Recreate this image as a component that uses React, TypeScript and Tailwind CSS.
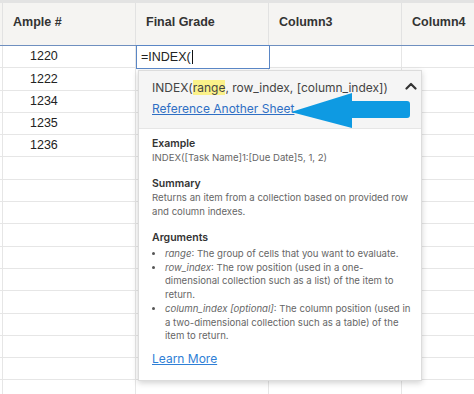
import React from 'react';

const columns = ['Ample #', 'Final Grade', 'Column3', 'Column4'];
const values = ['1220', '1222', '1234', '1235', '1236'];
const rowCount = 16;

const Popup: React.FC = () => (
  <div className="absolute left-[138px] top-[70px] w-[284px] h-[311px] bg-white border border-[#dcdcdc] shadow-[0_2px_6px_rgba(0,0,0,0.18)] font-['Inter',sans-serif]">
    {/* Signature */}
    <div className="h-[58px] bg-[#f5f5f5] border-b border-[#e6e6e6] px-[13px] pt-[9px] relative">
      <div className="text-[12px] leading-[16px] text-[#444]">
        INDEX(<span className="bg-[#fbf18a]">range</span>, row_index, [column_index])
      </div>
      <div className="mt-[5px] text-[12px] leading-[16px] text-[#2f6fc4] underline">Reference Another Sheet</div>
      <svg className="absolute left-[266px] top-[11px]" width="12" height="8" viewBox="0 0 12 8">
        <path d="M1.5 6.5 L6 2 L10.5 6.5" fill="none" stroke="#333" strokeWidth="2.2" strokeLinecap="round" strokeLinejoin="round" />
      </svg>
    </div>

    {/* Details */}
    <div className="pl-[13px] pr-[4px] pt-[8px] text-[9.6px] leading-[14px] text-[#666]">
      <div className="font-semibold text-[#333] text-[10.5px]">Example</div>
      <div>INDEX([Task Name]1:[Due Date]5, 1, 2)</div>

      <div className="mt-[12px] font-semibold text-[#333] text-[10.5px]">Summary</div>
      <div className="leading-[14px]">Returns an item from a collection based on provided row and column indexes.</div>

      <div className="mt-[12px] font-semibold text-[#333] text-[10.5px]">Arguments</div>
      <ul className="mt-[2px] list-disc pl-[13px] leading-[13.7px] marker:text-[#555]">
        <li><i>range</i>: The group of cells that you want to evaluate.</li>
        <li><i>row_index</i>: The row position (used in a one-dimensional collection such as a list) of the item to return.</li>
        <li><i>column_index [optional]</i>: The column position (used in a two-dimensional collection such as a table) of the item to return.</li>
      </ul>

      <div className="mt-[8px] text-[12px] leading-[16px] text-[#2f7fd6] underline">Learn More</div>
    </div>
  </div>
);

const App: React.FC = () => {
  return (
    <div className="relative w-[474px] h-[394px] overflow-hidden bg-white font-['Liberation_Sans',Arial,sans-serif]">
      <div className="h-[3px] bg-[#e3e3e3]" />

      {/* Header row */}
      <div className="flex h-[43px] bg-[#f5f4f2] border-b border-[#6f8fbf]">
        <div className="w-[3px] shrink-0 border-r border-[#e2e2e2]" />
        {columns.map((c) => (
          <div
            key={c}
            className="w-[133px] shrink-0 border-r border-[#e2e2e2] px-[10px] pb-[3px] flex items-center text-[12.5px] font-bold text-[#333]"
          >
            {c}
          </div>
        ))}
      </div>

      {/* Body rows */}
      {Array.from({ length: rowCount }).map((_, r) => (
        <div key={r} className="flex h-[22.3px] border-b border-[#e6e6e6]">
          <div className="w-[3px] shrink-0 border-r border-[#e6e6e6]" />
          <div className="w-[133px] shrink-0 border-r border-[#e6e6e6] pl-[27px] flex items-center text-[12.5px] text-[#222]">
            {values[r] ?? ''}
          </div>
          {r === 0 ? (
            <div className="w-[134px] shrink-0 -mt-px h-[24px] border border-[#5a86c5] pl-[4px] flex items-center text-[12.5px] text-[#222] bg-white z-10">
              =INDEX(<span className="inline-block w-px h-[14px] bg-[#111] ml-px" />
            </div>
          ) : (
            <div className="w-[133px] shrink-0 border-r border-[#e6e6e6]" />
          )}
          <div className={r === 0 ? 'w-[132px] shrink-0 border-r border-[#e6e6e6]' : 'w-[133px] shrink-0 border-r border-[#e6e6e6]'} />
          <div className="flex-1" />
        </div>
      ))}

      <Popup />

      {/* Callout arrow */}
      <svg className="absolute left-0 top-0" width="474" height="394" viewBox="0 0 474 394">
        <path
          d="M291 112 L352 93 L352 101 L407 101 Q410 101 410 104 L410 115 Q410 118 407 118 L352 118 L352 128 Z"
          fill="#0e9ae2"
        />
      </svg>
    </div>
  );
};

export default App;
